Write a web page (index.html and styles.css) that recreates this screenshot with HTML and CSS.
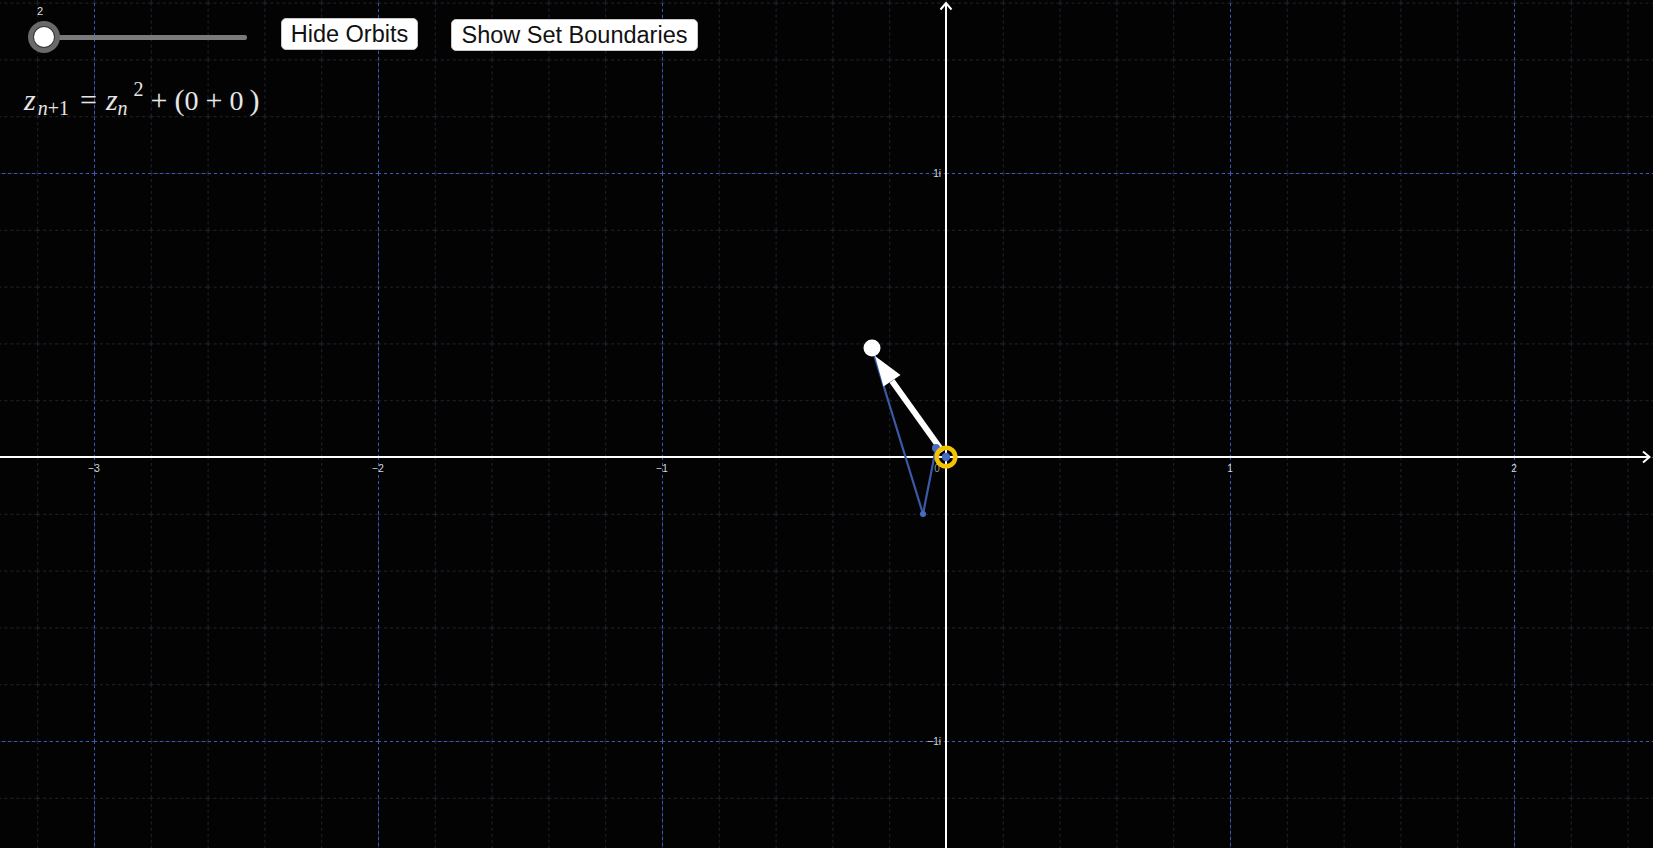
FILE: index.html
```html
<!DOCTYPE html>
<html>
<head>
<meta charset="utf-8">
<link rel="stylesheet" href="styles.css">
</head>
<body>
<div class="canvas">
  <svg class="plot" width="1653" height="848" viewBox="0 0 1653 848" xmlns="http://www.w3.org/2000/svg">
    <defs>
      <pattern id="minor" patternUnits="userSpaceOnUse" x="946" y="457" width="56.8" height="56.8">
        <path d="M0 0.5 H56.8 M0.5 0 V56.8" stroke="#222230" stroke-width="1" stroke-dasharray="3 3" fill="none"/>
      </pattern>
      <pattern id="major" patternUnits="userSpaceOnUse" x="946" y="457" width="284" height="284">
        <path d="M0 0.5 H284 M0.5 0 V284" stroke="#3a58c0" stroke-width="1" stroke-dasharray="3 3" fill="none"/>
      </pattern>
    </defs>
    <rect width="1653" height="848" fill="#030303"/>
    <rect width="1653" height="848" fill="url(#minor)"/>
    <rect width="1653" height="848" fill="url(#major)"/>
    <!-- axes -->
    <line x1="0" y1="457" x2="1649" y2="457" stroke="#fff" stroke-width="2"/>
    <polyline points="1643,451.5 1649.5,457 1643,462.5" fill="none" stroke="#fff" stroke-width="2"/>
    <line x1="946" y1="848" x2="946" y2="3" stroke="#fff" stroke-width="2"/>
    <polyline points="940.5,9.5 946,3 951.5,9.5" fill="none" stroke="#fff" stroke-width="2"/>
    <!-- tick labels -->
    <g class="ticks" font-family="Liberation Sans, Arial, sans-serif" font-size="10" fill="#d8d8d8" text-anchor="middle">
      <text x="94" y="472">−3</text>
      <text x="378" y="472">−2</text>
      <text x="662" y="472">−1</text>
      <text x="937" y="472" fill="#9a9a9a">0</text>
      <text x="1230" y="472">1</text>
      <text x="1514" y="472">2</text>
      <text x="941" y="177" text-anchor="end">1i</text>
      <text x="941" y="745" text-anchor="end">−1i</text>
    </g>
    <!-- orbit -->
    <polyline points="872,348 923,514 936,448" fill="none" stroke="#3a5aa6" stroke-width="2.2"/>
    <!-- vector -->
    <line x1="942.5" y1="451.5" x2="892" y2="381" stroke="#fff" stroke-width="6"/>
    <polygon points="875,356 900.5,375 883.5,386.5" fill="#fff"/>
    <circle cx="872" cy="348" r="8.5" fill="#fff"/>
    <circle cx="923" cy="514" r="3" fill="#4a6cc0"/>
    <circle cx="936" cy="448" r="4" fill="#4a6cc0"/>
    <circle cx="946" cy="457" r="9.3" fill="none" stroke="#f5c400" stroke-width="4.5"/>
    <circle cx="946" cy="457" r="4.2" fill="#4a6cc0"/>
  </svg>

  <div class="slider">
    <span class="slider-label">2</span>
    <div class="slider-track"></div>
    <div class="slider-knob"><div class="slider-knob-inner"></div></div>
  </div>

  <button class="btn btn-orbits">Hide Orbits</button>
  <button class="btn btn-bounds">Show Set Boundaries</button>

  <div class="formula">
    <span class="var">z</span><span class="sub"><i>n</i>+1</span><span class="op eq">=</span><span class="var">z</span><span class="sub subn"><i>n</i></span><span class="sup">2</span><span class="op">+</span><span class="paren">(</span><span class="num">0</span><span class="op">+</span><span class="num">0</span><span class="paren rparen">)</span>
  </div>
</div>
</body>
</html>
```

FILE: styles.css
```css
html, body {
  margin: 0;
  padding: 0;
  background: #030303;
  overflow: hidden;
}

.canvas {
  position: relative;
  width: 1653px;
  height: 848px;
  overflow: hidden;
}

.plot {
  position: absolute;
  left: 0;
  top: 0;
  display: block;
}

.slider {
  position: absolute;
  left: 28px;
  top: 5px;
  width: 225px;
  height: 50px;
}

.slider-label {
  position: absolute;
  left: 9px;
  top: 0;
  font-family: "Liberation Sans", Arial, sans-serif;
  font-size: 11px;
  color: #e0e0e0;
}

.slider-track {
  position: absolute;
  left: 16px;
  top: 29.5px;
  width: 203px;
  height: 5px;
  background: #7a7a7a;
  border-radius: 2px;
}

.slider-knob {
  position: absolute;
  left: 0;
  top: 16px;
  width: 32px;
  height: 32px;
  border-radius: 50%;
  background: #6a6a6a;
  display: flex;
  align-items: center;
  justify-content: center;
}

.slider-knob-inner {
  width: 20px;
  height: 20px;
  border-radius: 50%;
  background: #fff;
  box-shadow: 0 0 0 1px #3a3a3a;
}

.btn {
  position: absolute;
  height: 32px;
  padding: 0;
  margin: 0;
  background: #fff;
  color: #111;
  border: 1px solid #c8c8c8;
  border-radius: 5px;
  font-family: "Liberation Sans", Arial, sans-serif;
  font-size: 23.5px;
  line-height: 30px;
  text-align: center;
  box-sizing: border-box;
}

.btn-orbits {
  left: 281px;
  top: 18px;
  width: 137px;
}

.btn-bounds {
  left: 451px;
  top: 19px;
  width: 247px;
}

.formula {
  position: absolute;
  left: 24px;
  top: 78px;
  height: 44px;
  display: flex;
  align-items: baseline;
  font-family: "Liberation Serif", "Times New Roman", serif;
  font-size: 28px;
  color: #e6e6e6;
  line-height: 44px;
}

.var {
  font-style: italic;
  font-size: 30px;
}

.sub {
  font-size: 20px;
  position: relative;
  top: 5px;
  margin-left: 2px;
}

.sub.subn {
  margin-left: 0;
}

.sup {
  font-size: 20px;
  position: relative;
  top: -14px;
  margin-left: 6px;
}

.op {
  margin: 0 7px;
  font-size: 30px;
}

.op.eq {
  margin: 0 9px 0 11px;
}

.paren {
  font-size: 30px;
}

.rparen {
  margin-left: 6px;
}

.num {
  font-size: 28px;
}
```
